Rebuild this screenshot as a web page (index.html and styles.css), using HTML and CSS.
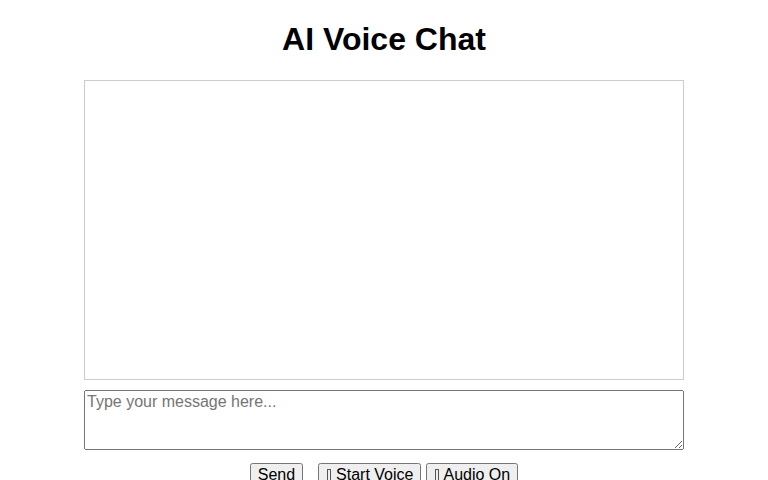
FILE: index.html
```html
<!DOCTYPE html>
<html lang="en">
<head>
    <meta charset="UTF-8">
    <meta name="viewport" content="width=device-width, initial-scale=1.0">
    <title>AI Voice Chat</title>
    <link rel="stylesheet" href="styles.css">
</head>
<body>
    <h1>AI Voice Chat</h1>
    <div id="chat-box"></div>
    <div id="input-area">
        <textarea id="message-input" placeholder="Type your message here..."></textarea>
        <div id="controls">
            <button id="send-button">Send</button>
            <button id="voice-button"><span class="missing-glyph"></span> Start Voice</button>
            <button id="audio-button"><span class="missing-glyph"></span> Audio On</button>
        </div>
    </div>
</body>
</html>
```

FILE: styles.css
```css
body {
    font-family: 'Liberation Sans', Arial, sans-serif;
    margin: 8px;
    color: #000;
    background-color: #fff;
}

h1 {
    text-align: center;
    font-size: 32px;
    margin: 13px 0 22px;
}

#chat-box {
    width: 600px;
    height: 300px;
    margin: 0 auto;
    border: 1px solid #ccc;
    box-sizing: border-box;
    overflow-y: auto;
}

#input-area {
    width: 600px;
    margin: 10px auto 0;
}

#message-input {
    display: block;
    width: 600px;
    height: 60px;
    box-sizing: border-box;
    font-family: 'Liberation Sans', Arial, sans-serif;
    font-size: 16px;
    padding: 2px;
    margin: 0;
}

#controls {
    text-align: center;
    margin-top: 13px;
}

#controls button {
    font-family: 'Liberation Sans', Arial, sans-serif;
    font-size: 16px;
    padding: 1px 6px;
    cursor: pointer;
}

#send-button {
    margin-right: 10px;
}

/* box shown where the icon font is missing */
.missing-glyph {
    display: inline-block;
    width: 2px;
    height: 10px;
    margin: 0 1px;
    border: 1px solid #555;
    vertical-align: -1px;
}
```
